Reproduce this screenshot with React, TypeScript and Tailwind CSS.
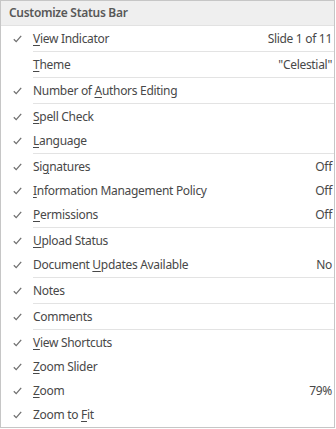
type Item = { label: string; key?: number; value?: string; checked: boolean; sep?: boolean }

const items: Item[] = [
  { label: 'View Indicator', key: 0, value: 'Slide 1 of 11', checked: true, sep: true },
  { label: 'Theme', key: 0, value: '"Celestial"', checked: false, sep: true },
  { label: 'Number of Authors Editing', key: 10, checked: true, sep: true },
  { label: 'Spell Check', key: 0, checked: true },
  { label: 'Language', key: 0, checked: true, sep: true },
  { label: 'Signatures', key: 2, value: 'Off', checked: true },
  { label: 'Information Management Policy', key: 0, value: 'Off', checked: true },
  { label: 'Permissions', key: 0, value: 'Off', checked: true, sep: true },
  { label: 'Upload Status', key: 0, checked: true },
  { label: 'Document Updates Available', key: 9, value: 'No', checked: true, sep: true },
  { label: 'Notes', checked: true, sep: true },
  { label: 'Comments', checked: true, sep: true },
  { label: 'View Shortcuts', key: 0, checked: true },
  { label: 'Zoom Slider', key: 0, checked: true },
  { label: 'Zoom', key: 0, value: '79%', checked: true },
  { label: 'Zoom to Fit', key: 8, checked: true },
]

function Check() {
  return (
    <svg width="9" height="8" viewBox="0 0 9 8" className="text-[#707070]">
      <path d="M0.8 4.2 L3.2 6.6 L8.2 0.8" fill="none" stroke="currentColor" strokeWidth="1.3" />
    </svg>
  )
}

function Label({ item }: { item: Item }) {
  if (item.key === undefined) return <span>{item.label}</span>
  const k = item.key
  return (
    <span>
      {item.label.slice(0, k)}
      <span className="underline underline-offset-[2px] decoration-1">{item.label[k]}</span>
      {item.label.slice(k + 1)}
    </span>
  )
}

export default function App() {
  return (
    <div className="w-[335px] h-[428px] border border-[#c6c6c6] bg-white text-[12px] tracking-[-0.3px] text-[#484848] overflow-hidden" style={{ fontFamily: '"Noto Sans", sans-serif' }}>
      <div className="h-[25px] bg-[#efefef] border-b border-[#e2e2e2] flex items-center pl-[8px] font-semibold text-[#585858]">
        Customize Status Bar
      </div>
      <div className="pt-[1px]">
        {items.map((it) => (
          <div key={it.label}>
            <div className="h-[24px] flex items-center">
              <div className="w-[32px] flex justify-center pl-[1px]">
                {it.checked && <Check />}
              </div>
              <div className="flex-1 leading-none">
                <Label item={it} />
              </div>
              {it.value && <div className="pr-[2px] leading-none">{it.value}</div>}
            </div>
            {it.sep && <div className="ml-[32px] h-[2px] border-t border-[#e3e3e3]" />}
          </div>
        ))}
      </div>
    </div>
  )
}
